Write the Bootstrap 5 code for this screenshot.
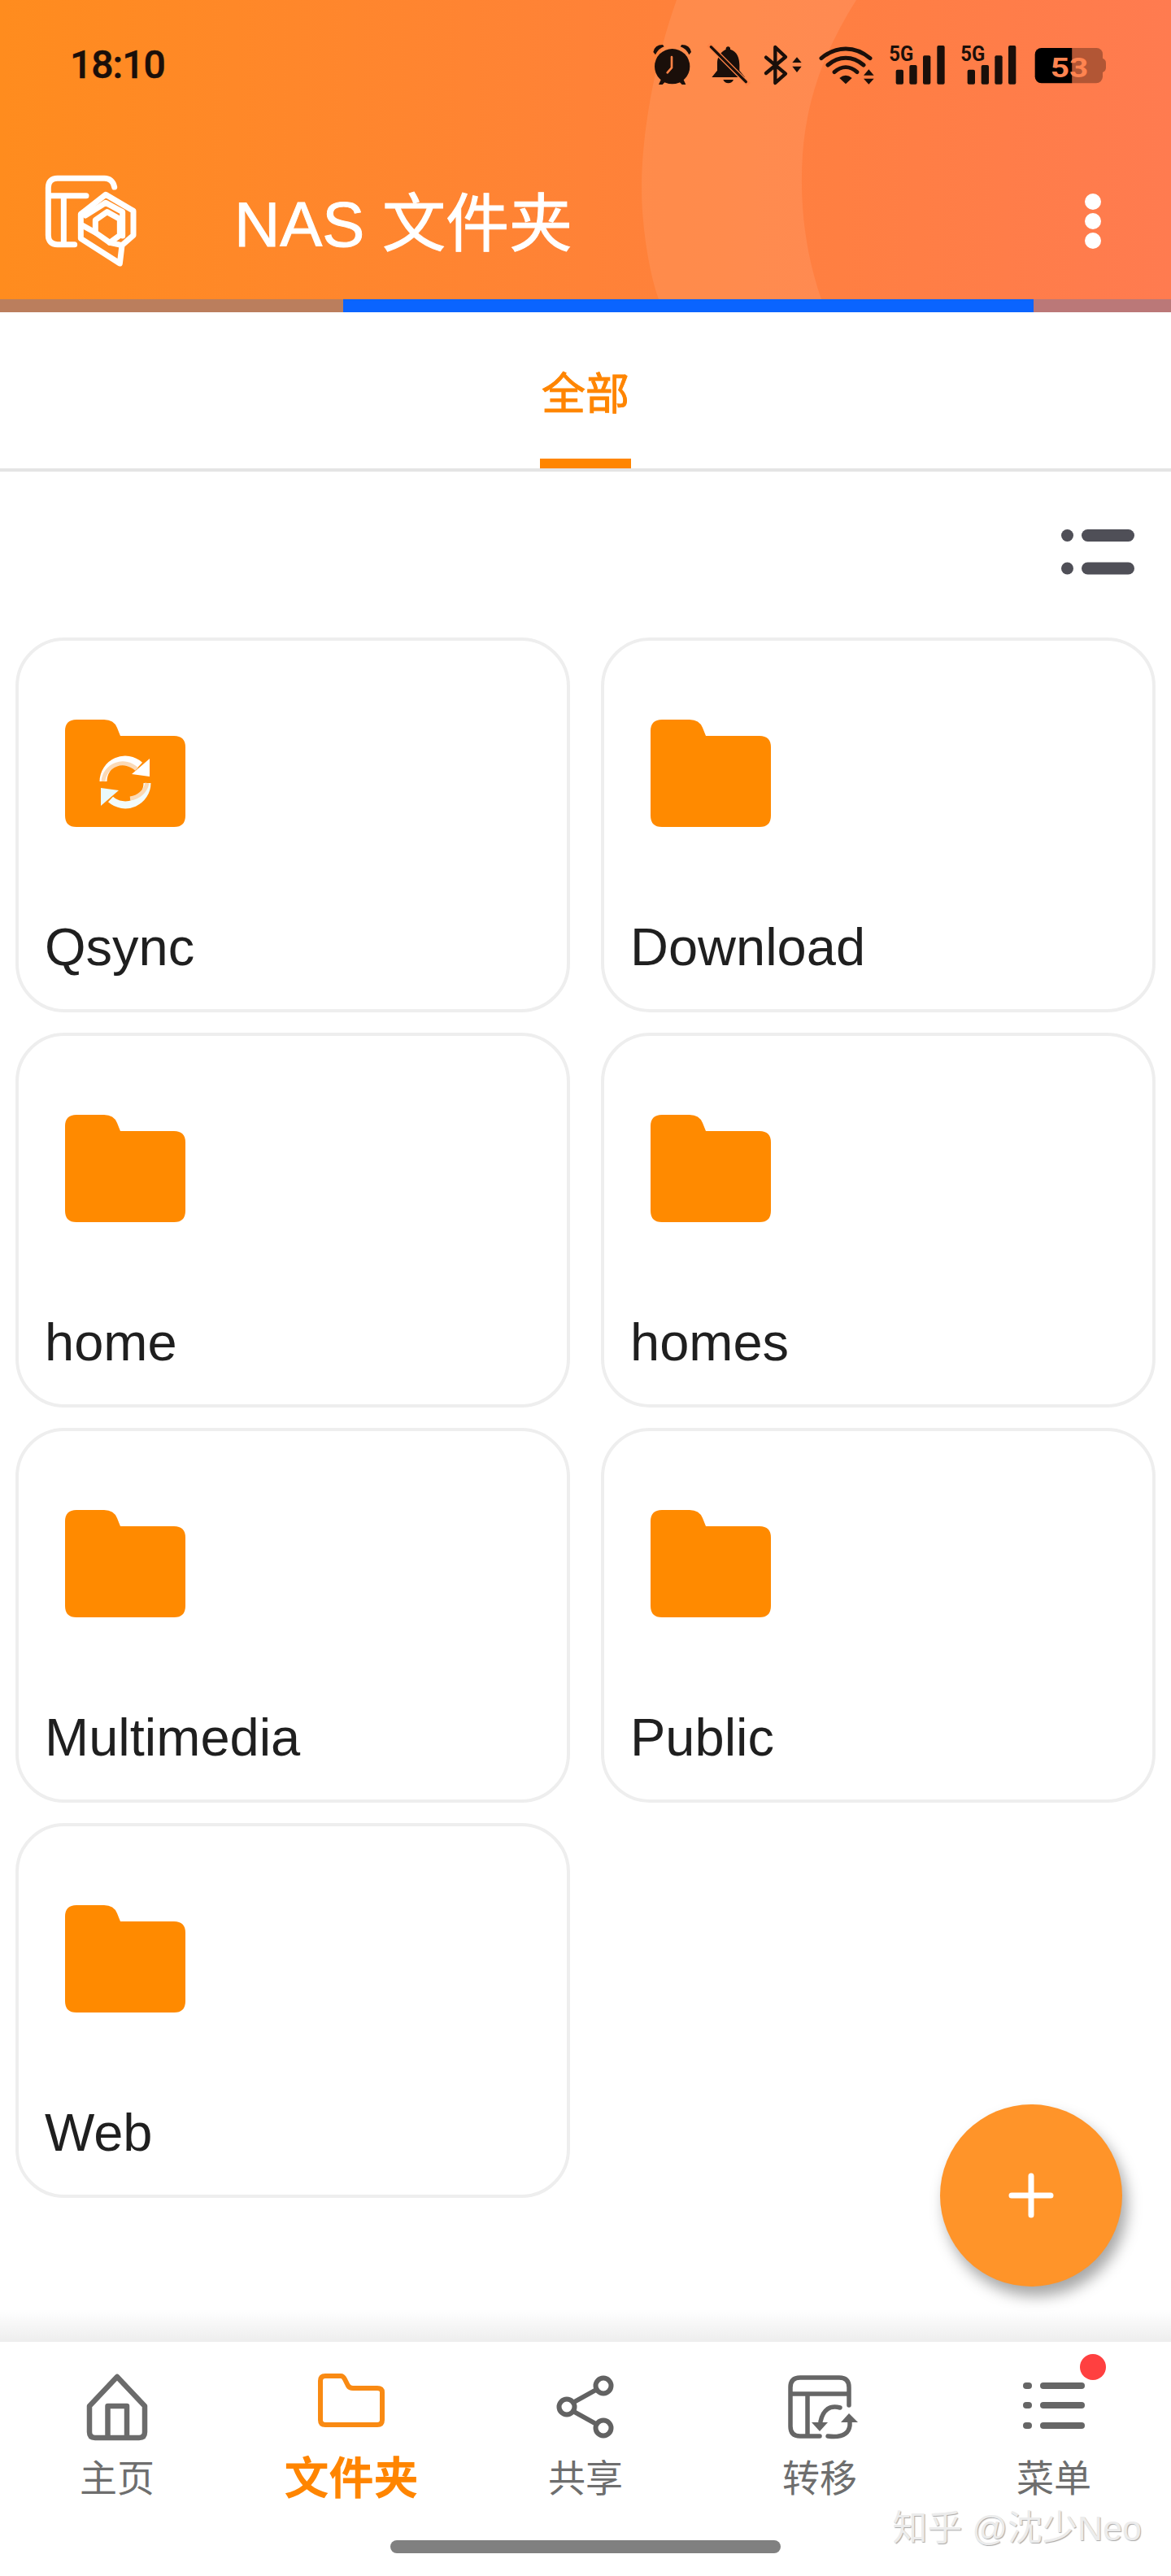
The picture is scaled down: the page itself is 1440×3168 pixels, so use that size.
<!DOCTYPE html>
<html lang="zh-CN">
<head>
    <meta charset="UTF-8">
    <meta name="viewport" content="width=device-width, initial-scale=1">
    <title>NAS 文件夹</title>
    <link href="https://cdn.jsdelivr.net/npm/bootstrap@5.3.0/dist/css/bootstrap.min.css" rel="stylesheet">
    <style>
        body {
            font-family: "Liberation Sans", "Noto Sans CJK SC", sans-serif;
            background-color: #fff;
            color: #1f1f1f;
        }
        .app-head {
            height: 384px;
            background: linear-gradient(90deg, #ff8c1e 0%, #ff8237 50%, #ff7b50 100%);
            overflow: hidden;
        }
        .head-arc { top: 0; left: 0; }
        .status-row { height: 160px; padding: 0 70px 0 86px; }
        .status-time { font-family: Roboto, sans-serif; font-weight: 500; font-size: 48px; color: #1a0f0a; letter-spacing: -1px; -webkit-text-stroke: .5px #1a0f0a; }
        .tool-row { height: 208px; padding: 16px 86px 0 40px; }
        .tool-logo { margin-top: -4px; }
        .tool-title { margin: 8px 0 0 98px; font-size: 78px; line-height: 1; color: #fff; -webkit-text-stroke: 1px #fff; }
        .tool-dot { width: 20px; height: 20px; background-color: #fff; }
        .load-bar { height: 16px; }
        .load-a { width: 422px; background-color: #bb7e5d; }
        .load-b { width: 849px; background-color: #0a64ff; }
        .load-c { width: 169px; background-color: #bb7878; }
        .tab-row { height: 196px; border-bottom: 4px solid #e4e4e4; }
        .tab-item {
            width: 112px; height: 192px; padding-top: 71px;
            border-bottom: 12px solid #ff8500;
            color: #ff8500; font-size: 54px; line-height: 60px; white-space: nowrap;
            -webkit-text-stroke: 1px #ff8500;
        }
        .view-row { height: 204px; padding: 71px 45px 0 0; }
        .folder-grid { display: grid; grid-template-columns: 682px 682px; column-gap: 38px; row-gap: 25px; padding: 0 19px; }
        .folder-card { height: 461px; border: 4px solid #eeeeee; border-radius: 60px; padding: 97px 0 0 32px; }
        .folder-icon { margin-left: 25px; display: block; }
        .folder-name { margin-top: 108px; font-size: 65px; line-height: 80px; color: #1f1f1f; }
        .fab {
            width: 224px; height: 224px; right: 60px; bottom: 68px;
            background-color: #ff9429; border: 0;
            box-shadow: 6px 12px 18px rgba(0, 0, 0, .35);
        }
        .bottom-nav { height: 288px; padding-top: 30px; background-color: #fff; }
        .bottom-nav::before {
            content: ""; position: absolute; left: 0; right: 0; top: -40px; height: 40px;
            background: linear-gradient(180deg, rgba(0, 0, 0, 0), rgba(0, 0, 0, .07));
        }
        .nav-cell { width: 288px; }
        .nav-pic { width: 100px; height: 100px; }
        .nav-label { margin-top: 10px; font-size: 46px; line-height: 56px; color: #6e6e6e; white-space: nowrap; }
        .nav-label-on { font-size: 55px; font-weight: 700; color: #ff8500; }
        .nav-alert { width: 32px; height: 32px; left: 82px; top: -15px; background-color: #ff4040; }
        .home-pill { width: 480px; height: 16px; margin-top: 48px; background-color: #808080; }
        .mark-text {
            right: 36px; bottom: 34px; font-size: 43px; line-height: 50px; white-space: nowrap;
            color: #ececec; text-shadow: 1px 1px 1px #a8a8a8;
        }
    </style>
</head>
<body class="d-flex flex-column min-vh-100">

<svg width="0" height="0" class="position-absolute">
    <symbol id="folder" viewBox="0 0 148 132">
        <path fill="#ff8a00" d="M14 0H48Q60 0 64 10L68 20H134Q148 20 148 34V118Q148 132 134 132H14Q0 132 0 118V14Q0 0 14 0Z"/>
    </symbol>
</svg>

<header class="app-head position-relative flex-shrink-0">
    <svg class="head-arc position-absolute" width="1440" height="368" viewBox="0 0 1440 368">
        <path fill="#fff" fill-opacity=".085" d="M832 0C800 90 785 190 790 260C793 300 800 340 810 368H1010C990 310 983 250 987 190C992 120 1015 60 1053 0Z"/>
    </svg>
    <div class="status-row d-flex justify-content-between align-items-center position-relative">
        <span class="status-time">18:10</span>
        <svg width="580" height="80" viewBox="0 0 1740 240">
            <g fill="#1a0f0a" stroke="none">
                <!-- alarm -->
                <circle cx="110" cy="125" r="65"/>
                <path d="M40 72Q45 45 75 45L80 52Q60 58 48 82Z"/>
                <path d="M180 72Q175 45 145 45L140 52Q160 58 172 82Z"/>
                <path d="M70 170L60 192H74L88 178Z"/>
                <path d="M150 170L160 192H146L132 178Z"/>
                <path d="M108 90V130L92 148" fill="none" stroke="#ff8245" stroke-width="8" stroke-linecap="round"/>
                <!-- bell off -->
                <path d="M316 52a8 8 0 0 1 8 10C350 70 358 95 358 120V140L378 165H256L276 140V112C276 90 290 70 308 62a8 8 0 0 1 8-10Z"/>
                <path d="M298 174H336Q330 187 317 187Q304 187 298 174Z"/>
                <path d="M244 44L392 192" fill="none" stroke="#ff8245" stroke-width="18"/>
                <path d="M253 53L382 182" fill="none" stroke="#1a0f0a" stroke-width="10" stroke-linecap="round"/>
                <!-- bluetooth -->
                <path d="M456 92L528 152L490 186V54L528 90L456 150" fill="none" stroke="#1a0f0a" stroke-width="13" stroke-linejoin="round" stroke-linecap="round"/>
                <path d="M553 111L570 91L587 111Z"/>
                <path d="M553 125L570 147L587 125Z"/>
                <!-- wifi -->
                <path d="M660 95C715 48 785 48 840 95" fill="none" stroke="#1a0f0a" stroke-width="15" stroke-linecap="round"/>
                <path d="M684 120C725 85 775 85 816 120" fill="none" stroke="#1a0f0a" stroke-width="15" stroke-linecap="round"/>
                <path d="M708 146C735 122 765 122 792 146" fill="none" stroke="#1a0f0a" stroke-width="15" stroke-linecap="round"/>
                <path d="M727 168Q750 148 773 168L750 190Z"/>
                <path d="M816 158L835 136L854 158Z"/>
                <path d="M816 170L835 191L854 170Z"/>
                <!-- signal 1 -->
                <rect x="935" y="137" width="28" height="54" rx="6"/>
                <rect x="985" y="120" width="28" height="71" rx="6"/>
                <rect x="1035" y="85" width="28" height="106" rx="6"/>
                <rect x="1087" y="48" width="28" height="143" rx="6"/>
                <!-- signal 2 -->
                <rect x="1199" y="137" width="28" height="54" rx="6"/>
                <rect x="1250" y="120" width="28" height="71" rx="6"/>
                <rect x="1300" y="85" width="28" height="106" rx="6"/>
                <rect x="1350" y="48" width="28" height="143" rx="6"/>
                <!-- battery -->
                <path d="M1585 57H1472A24 24 0 0 0 1448 81V163A24 24 0 0 0 1472 187H1585Z" fill="#000"/>
                <path d="M1585 57H1676A22 22 0 0 1 1698 79V163A24 24 0 0 1 1674 187H1585Z" fill="#000" fill-opacity=".3"/>
                <path d="M1698 95Q1710 100 1710 112V130Q1710 142 1698 147Z" fill="#000" fill-opacity=".3"/>
            </g>
            <g font-family="Roboto, sans-serif" font-weight="700" fill="#1a0f0a" font-size="80">
                <text x="910" y="105" textLength="90" lengthAdjust="spacingAndGlyphs">5G</text>
                <text x="1174" y="105" textLength="90" lengthAdjust="spacingAndGlyphs">5G</text>
            </g>
            <text x="1505" y="164" font-family="Roboto, sans-serif" font-weight="700" font-size="100" fill="#ff8450" textLength="140" lengthAdjust="spacingAndGlyphs">53</text>
        </svg>
    </div>
    <div class="tool-row d-flex align-items-center position-relative">
        <svg class="tool-logo flex-shrink-0" width="150" height="140" viewBox="0 0 450 420" fill="none" stroke="#fff" stroke-width="21" stroke-linecap="round" stroke-linejoin="round">
            <path d="M302 90C298 70 285 58 265 58H92C70 58 58 70 58 92V268C58 290 70 302 92 302H155"/>
            <path d="M60 122H198M115 122V298"/>
            <path d="M270 118L372 178V268L330 305L322 372L178 280V190Z"/>
            <path d="M195 195L270 148L332 182V270"/>
            <path d="M232 258V212L275 182L322 208V268L285 295Z"/>
            <path d="M185 232L232 258M285 295L330 305"/>
        </svg>
        <div class="tool-title flex-grow-1">NAS 文件夹</div>
        <div class="d-flex flex-column gap-1 flex-shrink-0">
            <span class="tool-dot rounded-circle d-block"></span>
            <span class="tool-dot rounded-circle d-block"></span>
            <span class="tool-dot rounded-circle d-block"></span>
        </div>
    </div>
    <div class="load-bar d-flex position-relative">
        <div class="load-a"></div>
        <div class="load-b"></div>
        <div class="load-c"></div>
    </div>
</header>

<div class="tab-row d-flex justify-content-center flex-shrink-0">
    <div class="tab-item text-center">全部</div>
</div>

<main class="position-relative flex-grow-1">
    <div class="view-row d-flex justify-content-end">
        <svg width="90" height="56" viewBox="0 0 90 56" fill="#4f4f57">
            <circle cx="7.5" cy="7.5" r="7.5"/>
            <rect x="25" y="0" width="65" height="15" rx="7.5"/>
            <circle cx="7.5" cy="48" r="7.5"/>
            <rect x="25" y="40.5" width="65" height="15" rx="7.5"/>
        </svg>
    </div>

    <div class="folder-grid">
        <div class="card folder-card">
            <svg class="folder-icon" width="148" height="132" viewBox="0 0 148 132">
                <use href="#folder"/>
                <path d="M47 76A27 27 0 0 1 92 56" fill="none" stroke="#fff" stroke-width="9"/>
                <path d="M47 76A24 24 0 0 1 88 61" fill="none" stroke="#fbd9b5" stroke-width="5"/>
                <path d="M104 48V70L82 67Z" fill="#fff"/>
                <path d="M101 78A27 27 0 0 1 56 98" fill="none" stroke="#f2fbfc" stroke-width="9"/>
                <path d="M101 78A24 24 0 0 1 80 97" fill="none" stroke="#fbd9b5" stroke-width="5"/>
                <path d="M44 106V84L66 87Z" fill="#eaf9fb"/>
            </svg>
            <div class="folder-name">Qsync</div>
        </div>
        <div class="card folder-card">
            <svg class="folder-icon" width="148" height="132"><use href="#folder"/></svg>
            <div class="folder-name">Download</div>
        </div>
        <div class="card folder-card">
            <svg class="folder-icon" width="148" height="132"><use href="#folder"/></svg>
            <div class="folder-name">home</div>
        </div>
        <div class="card folder-card">
            <svg class="folder-icon" width="148" height="132"><use href="#folder"/></svg>
            <div class="folder-name">homes</div>
        </div>
        <div class="card folder-card">
            <svg class="folder-icon" width="148" height="132"><use href="#folder"/></svg>
            <div class="folder-name">Multimedia</div>
        </div>
        <div class="card folder-card">
            <svg class="folder-icon" width="148" height="132"><use href="#folder"/></svg>
            <div class="folder-name">Public</div>
        </div>
        <div class="card folder-card">
            <svg class="folder-icon" width="148" height="132"><use href="#folder"/></svg>
            <div class="folder-name">Web</div>
        </div>
    </div>

    <button type="button" class="fab btn rounded-circle position-absolute d-flex align-items-center justify-content-center p-0">
        <svg width="56" height="56" viewBox="0 0 56 56" stroke="#fff" stroke-width="7" stroke-linecap="round">
            <path d="M4 28H52M28 4V52"/>
        </svg>
    </button>
</main>

<nav class="bottom-nav position-relative flex-shrink-0">
    <div class="d-flex">
        <div class="nav-cell d-flex flex-column align-items-center">
            <svg class="nav-pic" viewBox="0 0 100 100" fill="none" stroke="#6b6b6b" stroke-width="6.5" stroke-linejoin="round">
                <path d="M50 13L16 49V81Q16 88 23 88H77Q84 88 84 81V49Z"/>
                <path d="M38.5 88V49H62V88"/>
            </svg>
            <div class="nav-label">主页</div>
        </div>
        <div class="nav-cell d-flex flex-column align-items-center">
            <svg class="nav-pic" viewBox="0 0 100 100" fill="none" stroke="#f98a13" stroke-width="6" stroke-linejoin="round">
                <path d="M12 18Q12 12 18 12H37Q40 12 42 16L46 24Q48 27 52 27H82Q88 27 88 32V66Q88 72 82 72H18Q12 72 12 66Z"/>
            </svg>
            <div class="nav-label nav-label-on">文件夹</div>
        </div>
        <div class="nav-cell d-flex flex-column align-items-center">
            <svg class="nav-pic" viewBox="0 0 100 100" fill="none" stroke="#626262" stroke-width="6">
                <circle cx="72" cy="24" r="9.5"/>
                <circle cx="27" cy="50" r="9.5"/>
                <circle cx="72" cy="76" r="9.5"/>
                <path d="M36 44L63 29M36 56L63 71"/>
            </svg>
            <div class="nav-label">共享</div>
        </div>
        <div class="nav-cell d-flex flex-column align-items-center">
            <svg class="nav-pic" viewBox="0 0 100 100" fill="none" stroke="#666" stroke-width="5.5">
                <path d="M86 48V26Q86 14 74 14H26Q14 14 14 26V74Q14 86 26 86H50" stroke-linecap="round"/>
                <path d="M14 34H86M35 34V86"/>
                <path d="M75 51Q56 46 51 68" stroke-linecap="round"/>
                <path d="M40 69H60L50 80Z" fill="#666" stroke="none"/>
                <path d="M87 68V73Q85 89 60 86" stroke-linecap="round"/>
                <path d="M76 69H97L86 58Z" fill="#666" stroke="none"/>
            </svg>
            <div class="nav-label">转移</div>
        </div>
        <div class="nav-cell d-flex flex-column align-items-center">
            <div class="nav-pic position-relative">
                <svg class="nav-pic d-block" viewBox="0 0 100 100" fill="#666">
                    <rect x="12" y="20" width="11" height="8" rx="4"/>
                    <rect x="33" y="20" width="55" height="8" rx="4"/>
                    <rect x="12" y="44" width="11" height="8" rx="4"/>
                    <rect x="33" y="44" width="55" height="8" rx="4"/>
                    <rect x="12" y="69" width="11" height="8" rx="4"/>
                    <rect x="33" y="69" width="55" height="8" rx="4"/>
                </svg>
                <span class="nav-alert rounded-circle position-absolute"></span>
            </div>
            <div class="nav-label">菜单</div>
        </div>
    </div>
    <div class="home-pill rounded-pill mx-auto"></div>
    <div class="mark-text position-absolute">知乎 @沈少Neo</div>
</nav>

<script src="https://cdn.jsdelivr.net/npm/bootstrap@5.3.0/dist/js/bootstrap.bundle.min.js"></script>
</body>
</html>
